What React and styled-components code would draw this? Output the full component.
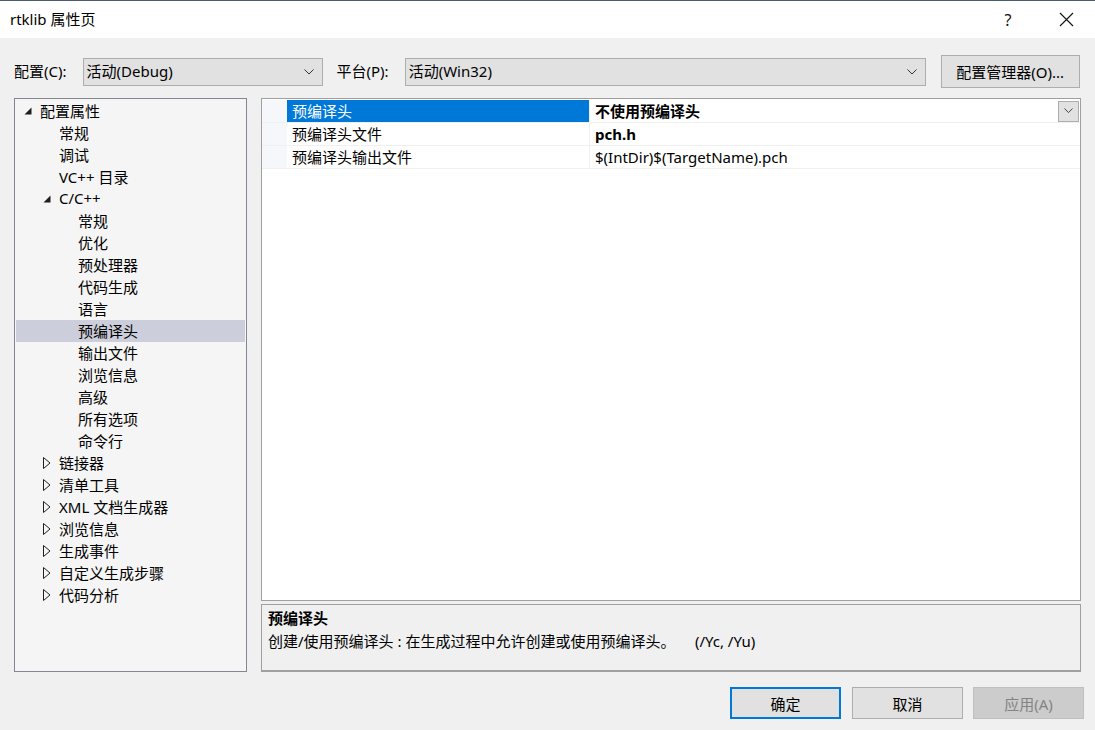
import React from "react";
import styled, { createGlobalStyle } from "styled-components";

const Global = createGlobalStyle`
  html, body { margin: 0; padding: 0; background: #f0f0f0; }
  body { font-family: "Segoe UI", "Noto Sans", "Noto Sans CJK SC", sans-serif; font-size: 15px; color: #000; }
  * { box-sizing: border-box; }
`;

const Window = styled.div`
  width: 1095px;
  height: 730px;
  background: #f0f0f0;
  border-top: 1px solid #4a5a70;
  display: flex;
  flex-direction: column;
  overflow: hidden;
`;

const TitleBar = styled.div`
  height: 37px;
  background: #fff;
  display: flex;
  align-items: center;
  padding-left: 10px;
`;

const Title = styled.div`
  flex: 1;
  font-size: 15px;
  margin-top: -2px;
`;

const TitleBtn = styled.div`
  width: 58px;
  height: 37px;
  display: flex;
  align-items: center;
  justify-content: center;
  font-size: 16px;
  color: #111;
`;

const Toolbar = styled.div`
  display: flex;
  align-items: center;
  padding: 17px 0 0 14px;
  height: 50px;
`;

const Label = styled.span`
  margin-right: ${(p) => p.$mr}px;
  white-space: nowrap;
  margin-top: -2px;
`;

const Select = styled.div`
  width: ${(p) => p.$w}px;
  height: 28px;
  background: #e1e1e1;
  border: 1px solid #adadad;
  display: flex;
  align-items: center;
  padding: 0 8px 0 3px;
  margin-right: ${(p) => p.$mr || 0}px;
`;

const SelectText = styled.span`
  flex: 1;
  margin-top: -2px;
`;

const Button = styled.div`
  width: ${(p) => p.$w}px;
  height: ${(p) => p.$h || 32}px;
  background: ${(p) => (p.$disabled ? "#cccccc" : "#e1e1e1")};
  color: ${(p) => (p.$disabled ? "#838383" : "#000")};
  border: ${(p) => (p.$primary ? "2px solid #0078d7" : p.$disabled ? "1px solid #bfbfbf" : "1px solid #adadad")};
  display: flex;
  align-items: center;
  justify-content: center;
  white-space: nowrap;
  margin-left: ${(p) => p.$ml || 0}px;
`;

const Main = styled.div`
  display: flex;
  padding: 10px 0 0 14px;
  height: 584px;
`;

const Tree = styled.div`
  width: 233px;
  height: 574px;
  border: 1px solid #828790;
  background: #f5f5f5;
  padding-top: 1px;
`;

const TreeRow = styled.div`
  height: 22px;
  display: flex;
  align-items: center;
  padding-left: ${(p) => 7 + p.$level * 19}px;
  padding-bottom: 2px;
  background: ${(p) => (p.$selected ? "#cccedb" : "transparent")};
  margin: 0 1px;
  white-space: nowrap;
`;

const Toggle = styled.span`
  width: 17px;
  height: 20px;
  display: flex;
  align-items: center;
  flex-shrink: 0;
  padding-left: 1px;
  padding-top: 1px;
`;

const RightCol = styled.div`
  margin-left: 14px;
  width: 820px;
  display: flex;
  flex-direction: column;
`;

const Grid = styled.div`
  height: 504px;
  border: 1px solid #a0a0a0;
  background: #fff;
  padding-top: 1px;
`;

const GridRow = styled.div`
  height: 23px;
  display: flex;
  border-bottom: 1px solid #f0f0f0;
`;

const Margin = styled.div`
  width: 25px;
  background: #f5f7fa;
`;

const NameCell = styled.div`
  width: 303px;
  padding: 0 0 1px 5px;
  display: flex;
  align-items: center;
  background: ${(p) => (p.$selected ? "#0078d7" : "#fff")};
  color: ${(p) => (p.$selected ? "#fff" : "#000")};
  border-right: 1px solid #f0f0f0;
`;

const ValueCell = styled.div`
  flex: 1;
  display: flex;
  align-items: center;
  padding-left: 5px;
  font-weight: ${(p) => (p.$bold ? 700 : 400)};
`;

const ValueText = styled.span`
  flex: 1;
  margin-top: -1px;
`;

const DropBtn = styled.div`
  width: 21px;
  height: 21px;
  background: #e1e1e1;
  border: 1px solid #adadad;
  display: flex;
  align-items: center;
  justify-content: center;
  margin-right: 1px;
`;

const Desc = styled.div`
  margin-top: 3px;
  height: 68px;
  border: 1px solid #a0a0a0;
  border-bottom: 2px solid #a0a0a0;
  background: #f0f0f0;
  padding: 2px 6px;
  line-height: 23px;
`;

const DescTitle = styled.div`
  font-weight: 700;
`;

const DescBody = styled.div`
  white-space: pre;
`;

const Footer = styled.div`
  display: flex;
  justify-content: flex-end;
  padding: 15px 11px 0 0;
`;

const Chevron = ({ size = 10 }) => (
  <svg width={size} height={size / 2 + 1} viewBox="0 0 10 6">
    <polyline points="0.5,0.5 5,5 9.5,0.5" fill="none" stroke="#333" strokeWidth="1" />
  </svg>
);

const Expanded = () => (
  <svg width="8" height="8" viewBox="0 0 8 8">
    <polygon points="7.5,0.5 7.5,7.5 0.5,7.5" fill="#1e1e1e" />
  </svg>
);

const Collapsed = () => (
  <svg width="8" height="12" viewBox="0 0 8 12">
    <polygon points="0.5,0.5 7,6 0.5,11.5" fill="none" stroke="#1e1e1e" strokeWidth="1" />
  </svg>
);

const treeItems = [
  { t: "配置属性", l: 0, s: "e" },
  { t: "常规", l: 1 },
  { t: "调试", l: 1 },
  { t: "VC++ 目录", l: 1 },
  { t: "C/C++", l: 1, s: "e" },
  { t: "常规", l: 2 },
  { t: "优化", l: 2 },
  { t: "预处理器", l: 2 },
  { t: "代码生成", l: 2 },
  { t: "语言", l: 2 },
  { t: "预编译头", l: 2, sel: true },
  { t: "输出文件", l: 2 },
  { t: "浏览信息", l: 2 },
  { t: "高级", l: 2 },
  { t: "所有选项", l: 2 },
  { t: "命令行", l: 2 },
  { t: "链接器", l: 1, s: "c" },
  { t: "清单工具", l: 1, s: "c" },
  { t: "XML 文档生成器", l: 1, s: "c" },
  { t: "浏览信息", l: 1, s: "c" },
  { t: "生成事件", l: 1, s: "c" },
  { t: "自定义生成步骤", l: 1, s: "c" },
  { t: "代码分析", l: 1, s: "c" },
];

const props = [
  { n: "预编译头", v: "不使用预编译头", bold: true, sel: true, drop: true },
  { n: "预编译头文件", v: "pch.h", bold: true },
  { n: "预编译头输出文件", v: "$(IntDir)$(TargetName).pch" },
];

export default function App() {
  return (
    <>
      <Global />
      <Window>
        <TitleBar>
          <Title>rtklib 属性页</Title>
          <TitleBtn>?</TitleBtn>
          <TitleBtn>
            <svg width="15" height="15" viewBox="0 0 15 15">
              <path d="M1 1L14 14M14 1L1 14" stroke="#111" strokeWidth="1.1" />
            </svg>
          </TitleBtn>
        </TitleBar>
        <Toolbar>
          <Label $mr={16}>配置(C):</Label>
          <Select $w={240} $mr={14}>
            <SelectText>活动(Debug)</SelectText>
            <Chevron />
          </Select>
          <Label $mr={16}>平台(P):</Label>
          <Select $w={521}>
            <SelectText>活动(Win32)</SelectText>
            <Chevron />
          </Select>
          <Button $w={139} $h={33} $ml={15}>配置管理器(O)...</Button>
        </Toolbar>
        <Main>
          <Tree>
            {treeItems.map((it, i) => (
              <TreeRow key={i} $level={it.l} $selected={it.sel}>
                <Toggle>{it.s === "e" ? <Expanded /> : it.s === "c" ? <Collapsed /> : null}</Toggle>
                {it.t}
              </TreeRow>
            ))}
          </Tree>
          <RightCol>
            <Grid>
              {props.map((p, i) => (
                <GridRow key={i}>
                  <Margin />
                  <NameCell $selected={p.sel}>{p.n}</NameCell>
                  <ValueCell $bold={p.bold}>
                    <ValueText>{p.v}</ValueText>
                    {p.drop && (
                      <DropBtn>
                        <Chevron size={9} />
                      </DropBtn>
                    )}
                  </ValueCell>
                </GridRow>
              ))}
            </Grid>
            <Desc>
              <DescTitle>预编译头</DescTitle>
              <DescBody>{"创建/使用预编译头 : 在生成过程中允许创建或使用预编译头。     (/Yc, /Yu)"}</DescBody>
            </Desc>
          </RightCol>
        </Main>
        <Footer>
          <Button $w={111} $primary>确定</Button>
          <Button $w={111} $ml={11}>取消</Button>
          <Button $w={111} $ml={10} $disabled>应用(A)</Button>
        </Footer>
      </Window>
    </>
  );
}
